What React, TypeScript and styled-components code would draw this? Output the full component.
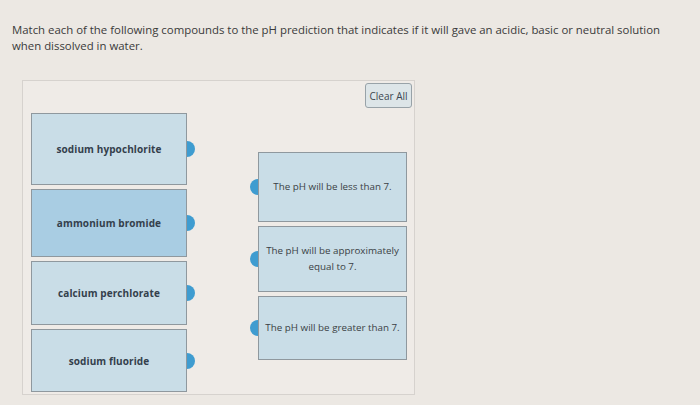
import React from "react";
import styled, { createGlobalStyle } from "styled-components";

const GlobalStyle = createGlobalStyle`
  html, body {
    margin: 0;
    padding: 0;
    background: #ece8e3;
  }
  body {
    font-family: "Open Sans", "DejaVu Sans", sans-serif;
    color: #333;
  }
`;

const Page = styled.div`
  width: 700px;
  height: 405px;
  overflow: hidden;
  background: #ece8e3;
  box-sizing: border-box;
  padding: 22px 0 0 12px;
`;

const Prompt = styled.p`
  margin: 0;
  width: 655px;
  font-size: 11.4px;
  line-height: 16px;
  color: #3a3a3a;
`;

const Panel = styled.div`
  margin: 26px 0 0 10px;
  width: 393px;
  height: 315px;
  box-sizing: border-box;
  border: 1px solid #d6d2ce;
  background: #efebe7;
  padding: 2px;
`;

const Header = styled.div`
  display: flex;
  justify-content: flex-end;
`;

const ClearButton = styled.button`
  width: 47px;
  height: 25px;
  border: 1px solid #98a2a8;
  border-radius: 3px;
  background: #dde5e8;
  color: #3c4650;
  font-family: "Open Sans", "DejaVu Sans", sans-serif;
  font-size: 10px;
  padding: 0;
`;

const Body = styled.div`
  display: flex;
  margin-top: 5px;
  padding-left: 6px;
  gap: 71px;
`;

const Column = styled.div<{ $offset?: number }>`
  display: flex;
  flex-direction: column;
  gap: 4px;
  margin-top: ${(p) => p.$offset || 0}px;
`;

const Card = styled.div<{ $active?: boolean; $w: number; $h: number }>`
  position: relative;
  width: ${(p) => p.$w}px;
  height: ${(p) => p.$h}px;
  box-sizing: border-box;
  border: 1px solid #8f989e;
  background: ${(p) => (p.$active ? "#a9cde3" : "#c9dde7")};
  display: flex;
  align-items: center;
  justify-content: center;
  text-align: center;
  padding: 0 2px;
`;

const Dot = styled.span<{ $side: "left" | "right" }>`
  position: absolute;
  top: 50%;
  width: 8px;
  height: 16px;
  margin-top: -8px;
  background: #3f9cd0;
  ${(p) =>
    p.$side === "right"
      ? "right: -9px; border-radius: 0 8px 8px 0;"
      : "left: -9px; border-radius: 8px 0 0 8px;"}
`;

const CompoundText = styled.span`
  font-size: 10px;
  font-weight: 700;
  color: #34404c;
  letter-spacing: 0.1px;
`;

const PredictionText = styled.span`
  font-size: 9.8px;
  line-height: 16px;
  color: #3a3f45;
`;

const compounds = [
  { name: "sodium hypochlorite", h: 72 },
  { name: "ammonium bromide", h: 68, active: true },
  { name: "calcium perchlorate", h: 64 },
  { name: "sodium fluoride", h: 63 },
];

const predictions = [
  { text: "The pH will be less than 7.", h: 70 },
  { text: "The pH will be approximately equal to 7.", h: 66 },
  { text: "The pH will be greater than 7.", h: 64 },
];

export default function App() {
  return (
    <Page>
      <GlobalStyle />
      <Prompt>
        Match each of the following compounds to the pH prediction that indicates if it will gave an acidic,
        basic or neutral solution when dissolved in water.
      </Prompt>
      <Panel>
        <Header>
          <ClearButton>Clear All</ClearButton>
        </Header>
        <Body>
          <Column>
            {compounds.map((c) => (
              <Card key={c.name} $active={c.active} $w={156} $h={c.h}>
                <CompoundText>{c.name}</CompoundText>
                <Dot $side="right" />
              </Card>
            ))}
          </Column>
          <Column $offset={39}>
            {predictions.map((p) => (
              <Card key={p.text} $w={149} $h={p.h}>
                <PredictionText>{p.text}</PredictionText>
                <Dot $side="left" />
              </Card>
            ))}
          </Column>
        </Body>
      </Panel>
    </Page>
  );
}
